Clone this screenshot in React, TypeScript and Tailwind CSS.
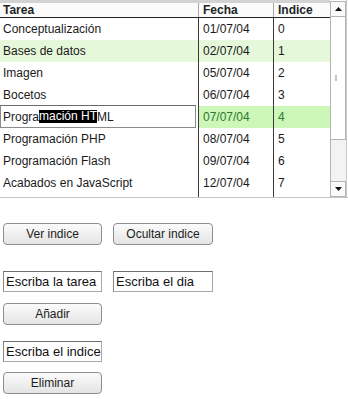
import React from 'react'

type Row = { tarea: string; fecha: string; indice: string }

const rows: Row[] = [
  { tarea: 'Conceptualización', fecha: '01/07/04', indice: '0' },
  { tarea: 'Bases de datos', fecha: '02/07/04', indice: '1' },
  { tarea: 'Imagen', fecha: '05/07/04', indice: '2' },
  { tarea: 'Bocetos', fecha: '06/07/04', indice: '3' },
  { tarea: 'Programación HTML', fecha: '07/07/04', indice: '4' },
  { tarea: 'Programación PHP', fecha: '08/07/04', indice: '5' },
  { tarea: 'Programación Flash', fecha: '09/07/04', indice: '6' },
  { tarea: 'Acabados en JavaScript', fecha: '12/07/04', indice: '7' },
]

function Arrow({ up }: { up?: boolean }) {
  return (
    <svg width="7" height="4" viewBox="0 0 7 4">
      <path d={up ? 'M0 4 L3.5 0 L7 4 Z' : 'M0 0 L3.5 4 L7 0 Z'} fill="#111" />
    </svg>
  )
}

function Button({ label, w }: { label: string; w: string }) {
  return (
    <button
      className={`${w} h-[22px] rounded-[4px] border border-[#8e8e8e] bg-gradient-to-b from-[#fbfbfb] to-[#e4e4e4] text-[12px] leading-none text-[#1c1c1c]`}
    >
      {label}
    </button>
  )
}

function Field({ value, w }: { value: string; w: string }) {
  return (
    <div
      className={`${w} h-[21px] border border-[#a8a8a8] border-t-[#6f6f6f] border-l-[#858585] bg-white pl-[2px] text-[13px] leading-[19px] text-[#111] whitespace-nowrap overflow-hidden`}
    >
      {value}
    </div>
  )
}

export default function App() {
  return (
    <div className="w-[348px] h-[399px] bg-white font-['Liberation_Sans',Arial,sans-serif]">
      {/* grid */}
      <div className="flex h-[198px] border-b border-[#c4c4c4]">
        <div className="w-[330px] flex flex-col">
          <div className="grid grid-cols-[199px_75px_56px] h-[18px] shrink-0 border-t-[3px] border-t-[#d2d2d2] border-b border-b-[#222] bg-[#fbfbfb] text-[12px] font-bold leading-[14px] text-[#1b2626]">
            <div className="pl-[3px] border-r border-[#a8a8a8]">Tarea</div>
            <div className="pl-[4px] border-r border-[#a8a8a8]">Fecha</div>
            <div className="pl-[4px]">Indice</div>
          </div>
          <div className="flex-1 min-h-0 grid grid-cols-[199px_75px_56px] grid-rows-[repeat(8,22px)_1fr] text-[12px] text-[#1a1a1a]">
            {rows.map((r, i) => {
              const alt = i === 1
              const sel = i === 4
              const bg = alt ? 'bg-[#e6f8da]' : ''
              const selCls = sel ? 'bg-[#cdf6b9] text-[#2c7a2c]' : bg
              return (
                <React.Fragment key={r.indice}>
                  <div className={`border-r border-[#3a3a3a] ${bg} flex items-center`}>
                    {sel ? (
                      <div className="w-[196px] h-[23px] -mt-[1px] border border-[#8a8a8a] border-t-[#6a6a6a] bg-white pl-[2px] flex items-center whitespace-nowrap">
                        Progra
                        <span className="bg-black text-white leading-[13px]">mación HT</span>
                        ML
                      </div>
                    ) : (
                      <span className="pl-[3px] whitespace-nowrap">{r.tarea}</span>
                    )}
                  </div>
                  <div className={`border-r border-[#3a3a3a] ${selCls} pl-[4px] flex items-center`}>
                    {r.fecha}
                  </div>
                  <div className={`${selCls} pl-[4px] flex items-center`}>{r.indice}</div>
                </React.Fragment>
              )
            })}
            <div className="border-r border-[#3a3a3a]" />
            <div className="border-r border-[#3a3a3a]" />
            <div />
          </div>
        </div>
        {/* scrollbar */}
        <div className="w-[17px] pt-[1px] border-r border-[#c8c8c8] flex flex-col">
          <div className="w-[16px] h-[16px] shrink-0 border border-[#b4b4b4] bg-[#fafafa] flex items-center justify-center">
            <Arrow up />
          </div>
          <div className="w-[16px] h-[123px] shrink-0 border border-t-0 border-[#b4b4b4] bg-white flex items-center justify-start pl-[4px]">
            <div className="w-[2px] h-[6px] bg-[#c4c4c4]" />
          </div>
          <div className="w-[16px] flex-1 border-l border-[#b4b4b4] bg-[#f3f3f3]" />
          <div className="w-[16px] h-[16px] shrink-0 border border-[#b4b4b4] bg-[#fafafa] flex items-center justify-center">
            <Arrow />
          </div>
        </div>
      </div>

      {/* controls */}
      <div className="pl-[3px] pt-[25px] flex flex-col">
        <div className="flex gap-[11px]">
          <Button label="Ver indice" w="w-[99px]" />
          <Button label="Ocultar indice" w="w-[100px]" />
        </div>
        <div className="mt-[26px] flex gap-[11px]">
          <Field value="Escriba la tarea" w="w-[99px]" />
          <Field value="Escriba el dia" w="w-[100px]" />
        </div>
        <div className="mt-[9px]">
          <Button label="Añadir" w="w-[99px]" />
        </div>
        <div className="mt-[16px]">
          <Field value="Escriba el indice" w="w-[99px]" />
        </div>
        <div className="mt-[8px]">
          <Button label="Eliminar" w="w-[99px]" />
        </div>
      </div>
    </div>
  )
}
